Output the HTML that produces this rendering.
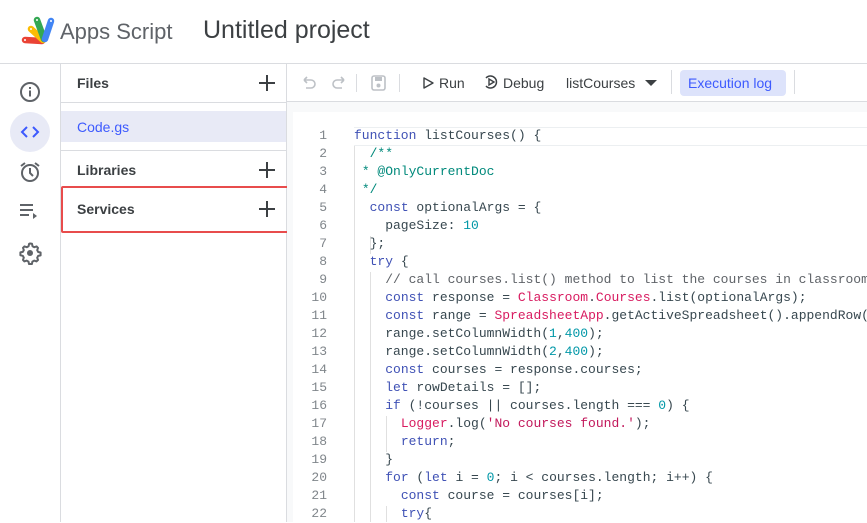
<!DOCTYPE html>
<html><head><style>
*{margin:0;padding:0;box-sizing:border-box}
body{width:867px;height:522px;overflow:hidden;background:#fff;font-family:"Liberation Sans",sans-serif;color:#3c4043;position:relative}
.abs{position:absolute}
.hdr{left:0;top:0;width:867px;height:64px;border-bottom:1px solid #dadce0}
.rail{left:0;top:64px;width:61px;height:458px;border-right:1px solid #dadce0}
.panel{left:61px;top:64px;width:226px;height:458px;border-right:1px solid #dadce0}
.ptitle{font-size:14px;font-weight:bold;color:#3c4043}
.plus{position:absolute;width:16px;height:16px}
.plus:before,.plus:after{content:"";position:absolute;background:#3c4043}
.plus:before{left:7px;top:0;width:2px;height:16px}
.plus:after{left:0;top:7px;width:16px;height:2px}
.tb{left:287px;top:64px;width:580px;height:38px;border-bottom:1px solid #dadce0}
.code{font-family:"Liberation Mono",monospace;font-size:13px;line-height:18px;white-space:pre;color:#37474f}
.ln{font-family:"Liberation Mono",monospace;font-size:13px;line-height:18px;color:#80868b;text-align:right;width:40px}
.k{color:#3f51b5}.c{color:#00897b}.s{color:#c2185b}.n{color:#0097a7}.m{color:#d81b60}
</style></head><body>
<div class="abs hdr"></div>
<svg class="abs" style="left:20px;top:14px" width="38" height="32" viewBox="0 0 38 32">
<g stroke-linecap="round" stroke-width="6.5" fill="none">
<line x1="5" y1="26" x2="22" y2="27" stroke="#ea4335"/>
<line x1="11" y1="15" x2="23" y2="26" stroke="#fbbc04"/>
<line x1="17" y1="6" x2="24" y2="25" stroke="#34a853"/>
<line x1="31" y1="7" x2="25" y2="25" stroke="#4285f4"/>
</g>
<g fill="#fff"><circle cx="5" cy="26" r="1"/><circle cx="11" cy="15" r="1"/><circle cx="17" cy="6" r="1"/><circle cx="31" cy="7" r="1"/></g>
</svg>
<div class="abs" style="left:60px;top:19px;font-size:22px;color:#5f6368">Apps Script</div>
<div class="abs" style="left:203px;top:16px;font-size:25px;color:#3c4043">Untitled project</div>

<div class="abs rail"></div>
<svg class="abs" style="left:19px;top:81px" width="22" height="22" viewBox="0 0 22 22"><circle cx="11" cy="11" r="9" fill="none" stroke="#5f6368" stroke-width="2"/><rect x="10" y="9.5" width="2" height="6" fill="#5f6368"/><rect x="10" y="6" width="2" height="2" fill="#5f6368"/></svg>
<div class="abs" style="left:10px;top:112px;width:40px;height:40px;border-radius:50%;background:#e8eaf6"></div>
<svg class="abs" style="left:19px;top:121px" width="22" height="22" viewBox="0 0 22 22"><path d="M8 6 L3 11 L8 16 M14 6 L19 11 L14 16" fill="none" stroke="#3d5afe" stroke-width="2"/></svg>
<svg class="abs" style="left:18px;top:160px" width="24" height="24" viewBox="0 0 24 24"><circle cx="12" cy="13" r="8" fill="none" stroke="#5f6368" stroke-width="2"/><path d="M12 8v5l3 3M3 6l4-3M21 6l-4-3" fill="none" stroke="#5f6368" stroke-width="2"/></svg>
<svg class="abs" style="left:18px;top:202px" width="24" height="20" viewBox="0 0 24 20"><path d="M2 3h13M2 8h13M2 13h9" stroke="#5f6368" stroke-width="2"/><path d="M15 11l4 3-4 3z" fill="#5f6368"/></svg>
<svg class="abs" style="left:18px;top:241px" width="24" height="24" viewBox="0 0 24 24"><path d="M12 2.5l2 .3.5 2.4 1.8 1 2.3-.8 1.4 1.5-.8 2.3 1 1.8 2.4.5v2.9l-2.4.5-1 1.8.8 2.3-1.5 1.4-2.3-.8-1.8 1-.5 2.4h-2.9l-.5-2.4-1.8-1-2.3.8-1.4-1.5.8-2.3-1-1.8-2.4-.5v-2.9l2.4-.5 1-1.8-.8-2.3 1.5-1.4 2.3.8 1.8-1 .5-2.4z" fill="none" stroke="#5f6368" stroke-width="2" stroke-linejoin="round"/><circle cx="12" cy="12" r="3" fill="#5f6368"/></svg>

<div class="abs panel"></div>
<div class="abs ptitle" style="left:77px;top:75px">Files</div>
<div class="plus" style="left:259px;top:75px"></div>
<div class="abs" style="left:61px;top:102px;width:225px;height:1px;background:#dadce0"></div>
<div class="abs" style="left:61px;top:111px;width:225px;height:31px;background:#e8eaf6"></div>
<div class="abs" style="left:77px;top:119px;font-size:14px;color:#3d5afe">Code.gs</div>
<div class="abs" style="left:61px;top:150px;width:225px;height:1px;background:#dadce0"></div>
<div class="abs ptitle" style="left:77px;top:162px">Libraries</div>
<div class="plus" style="left:259px;top:162px"></div>
<div class="abs" style="left:61px;top:186px;width:228px;height:47px;border:2px solid #e84c4c;border-radius:2px"></div>
<div class="abs ptitle" style="left:77px;top:201px">Services</div>
<div class="plus" style="left:259px;top:201px"></div>

<div class="abs tb"></div>
<div class="abs" style="left:287px;top:102px;width:580px;height:420px;background:#f8f9fa"></div>
<div class="abs" style="left:293px;top:112px;width:574px;height:410px;background:#fff"></div>
<svg class="abs" style="left:300px;top:74px" width="100" height="18" viewBox="0 0 100 18"><path d="M4 6h7a4 4 0 010 8H6M4 6l3-3M4 6l3 3" fill="none" stroke="#bdc1c6" stroke-width="1.6"/><path d="M44 6h-7a4 4 0 000 8h5M44 6l-3-3M44 6l-3 3" fill="none" stroke="#bdc1c6" stroke-width="1.6"/><rect x="56" y="0" width="1" height="18" fill="#dadce0"/><rect x="72" y="2" width="13" height="14" rx="2" fill="none" stroke="#bdc1c6" stroke-width="1.6"/><rect x="75" y="3" width="7" height="4" fill="#bdc1c6"/><circle cx="78.5" cy="11.5" r="2" fill="#bdc1c6"/><rect x="99" y="0" width="1" height="18" fill="#dadce0"/></svg>
<svg class="abs" style="left:421px;top:76px" width="14" height="14" viewBox="0 0 14 14"><path d="M3 2l9 5-9 5z" fill="none" stroke="#3c4043" stroke-width="1.4" stroke-linejoin="round"/></svg>
<div class="abs" style="left:439px;top:75px;font-size:14px">Run</div>
<svg class="abs" style="left:483px;top:74px" width="16" height="16" viewBox="0 0 16 16"><path d="M3 4A6 6 0 1 1 3 12" fill="none" stroke="#3c4043" stroke-width="1.5"/><path d="M6 5l5 3-5 3z" fill="none" stroke="#3c4043" stroke-width="1.4"/></svg>
<div class="abs" style="left:503px;top:75px;font-size:14px">Debug</div>
<div class="abs" style="left:566px;top:75px;font-size:14px">listCourses</div>
<svg class="abs" style="left:645px;top:80px" width="12" height="7"><path d="M0 0h12L6 6z" fill="#3c4043"/></svg>
<div class="abs" style="left:671px;top:70px;width:1px;height:24px;background:#dadce0"></div>
<div class="abs" style="left:680px;top:70px;width:106px;height:26px;border-radius:4px;background:#dde3fb"></div>
<div class="abs" style="left:688px;top:75px;font-size:14px;color:#3d5afe">Execution log</div>
<div class="abs" style="left:794px;top:70px;width:1px;height:24px;background:#dadce0"></div>

<div class="abs" style="left:354px;top:127px;width:513px;height:19px;border-top:1px solid #eceff1;border-bottom:1px solid #eceff1"></div>
<div class="abs" style="left:354px;top:146px;width:1px;height:376px;background:#e0e0e0"></div>
<div class="abs" style="left:370px;top:236px;width:1px;height:18px;background:#e0e0e0"></div>
<div class="abs" style="left:370px;top:272px;width:1px;height:250px;background:#e0e0e0"></div>
<div class="abs" style="left:386px;top:416px;width:1px;height:36px;background:#e0e0e0"></div>
<div class="abs" style="left:386px;top:506px;width:1px;height:16px;background:#e0e0e0"></div>
<div class="abs ln" style="left:287px;top:127px">1<br>2<br>3<br>4<br>5<br>6<br>7<br>8<br>9<br>10<br>11<br>12<br>13<br>14<br>15<br>16<br>17<br>18<br>19<br>20<br>21<br>22</div>
<div class="abs code" style="left:354px;top:127px"><span class="k">function</span> listCourses() {
  <span class="c">/**</span>
 <span class="c">* @OnlyCurrentDoc</span>
 <span class="c">*/</span>
  <span class="k">const</span> optionalArgs = {
    pageSize: <span class="n">10</span>
  };
  <span class="k">try</span> {
    <span style="color:#5f6368">// call courses.list() method to list the courses in classroom</span>
    <span class="k">const</span> response = <span class="m">Classroom</span>.<span class="m">Courses</span>.list(optionalArgs);
    <span class="k">const</span> range = <span class="m">SpreadsheetApp</span>.getActiveSpreadsheet().appendRow(
    range.setColumnWidth(<span class="n">1</span>,<span class="n">400</span>);
    range.setColumnWidth(<span class="n">2</span>,<span class="n">400</span>);
    <span class="k">const</span> courses = response.courses;
    <span class="k">let</span> rowDetails = [];
    <span class="k">if</span> (!courses || courses.length === <span class="n">0</span>) {
      <span class="m">Logger</span>.log(<span class="s">'No courses found.'</span>);
      <span class="k">return</span>;
    }
    <span class="k">for</span> (<span class="k">let</span> i = <span class="n">0</span>; i &lt; courses.length; i++) {
      <span class="k">const</span> course = courses[i];
      <span class="k">try</span>{</div>
</body></html>
